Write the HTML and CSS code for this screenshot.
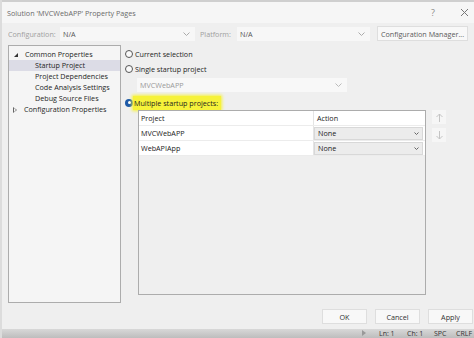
FILE: index.html
```html
<!DOCTYPE html>
<html>
<head>
<meta charset="utf-8">
<link rel="stylesheet" href="styles.css">
</head>
<body>
<div class="dialog">
  <div class="titlebar">
    <span class="title">Solution 'MVCWebAPP' Property Pages</span>
    <span class="tb-btn help">?</span>
    <span class="tb-btn close">
      <svg width="9" height="9" viewBox="0 0 9 9"><path d="M1 1L8 8M8 1L1 8" stroke="#777" stroke-width="1"/></svg>
    </span>
  </div>
  <div class="config-row">
    <span class="lbl lbl-config">Configuration:</span>
    <div class="combo combo-config"><span>N/A</span><svg class="chev" width="7" height="4" viewBox="0 0 7 4"><path d="M0.5 0.5L3.5 3.5L6.5 0.5" stroke="#aaa" fill="none"/></svg></div>
    <span class="lbl lbl-platform">Platform:</span>
    <div class="combo combo-platform"><span>N/A</span><svg class="chev" width="7" height="4" viewBox="0 0 7 4"><path d="M0.5 0.5L3.5 3.5L6.5 0.5" stroke="#aaa" fill="none"/></svg></div>
    <div class="btn cfg-btn">Configuration Manager...</div>
  </div>
  <div class="main">
    <div class="tree">
      <div class="node top"><span class="tri expanded"></span>Common Properties</div>
      <div class="node child selected">Startup Project</div>
      <div class="node child">Project Dependencies</div>
      <div class="node child">Code Analysis Settings</div>
      <div class="node child">Debug Source Files</div>
      <div class="node top"><span class="tri collapsed"></span>Configuration Properties</div>
    </div>
    <div class="right">
      <label class="radio-row r1"><span class="radio"></span>Current selection</label>
      <label class="radio-row r2"><span class="radio"></span>Single startup project</label>
      <div class="combo combo-single"><span>MVCWebAPP</span><svg class="chev" width="7" height="4" viewBox="0 0 7 4"><path d="M0.5 0.5L3.5 3.5L6.5 0.5" stroke="#bbb" fill="none"/></svg></div>
      <label class="radio-row r3"><span class="radio checked"></span><span class="hl">Multiple startup projects:</span></label>
      <div class="grid-wrap">
        <div class="grid">
          <div class="grow ghead"><div class="c1">Project</div><div class="c2">Action</div></div>
          <div class="grow"><div class="c1">MVCWebAPP</div><div class="c2"><div class="cell-combo">None<svg class="chev" width="5" height="3" viewBox="0 0 5 3"><path d="M0.5 0.5L2.5 2.5L4.5 0.5" stroke="#666" fill="none"/></svg></div></div></div>
          <div class="grow"><div class="c1">WebAPIApp</div><div class="c2"><div class="cell-combo">None<svg class="chev" width="5" height="3" viewBox="0 0 5 3"><path d="M0.5 0.5L2.5 2.5L4.5 0.5" stroke="#666" fill="none"/></svg></div></div></div>
        </div>
        <div class="arrows">
          <div class="arrow-btn"><svg width="7" height="9" viewBox="0 0 7 9"><path d="M3.5 9V1M0.5 4L3.5 1L6.5 4" stroke="#c4c4c4" fill="none"/></svg></div>
          <div class="arrow-btn"><svg width="7" height="9" viewBox="0 0 7 9"><path d="M3.5 0V8M0.5 5L3.5 8L6.5 5" stroke="#c4c4c4" fill="none"/></svg></div>
        </div>
      </div>
    </div>
  </div>
  <div class="buttons">
    <div class="btn dbtn">OK</div>
    <div class="btn dbtn">Cancel</div>
    <div class="btn dbtn">Apply</div>
  </div>
  <div class="statusbar">
    <span class="sb-tri"></span>
    <span class="sb-item ln">Ln: 1</span>
    <span class="sb-item ch">Ch: 1</span>
    <span class="sb-item spc">SPC</span>
    <span class="sb-item crlf">CRLF</span>
  </div>
</div>
</body>
</html>
```

FILE: styles.css
```css
html, body {
  margin: 0;
  padding: 0;
}
body {
  width: 474px;
  height: 338px;
  overflow: hidden;
  background: #efefef;
  font-family: "Open Sans", "Noto Sans", sans-serif;
  font-size: 7.2px;
  color: #222;
}
.dialog {
  display: flex;
  flex-direction: column;
  height: 338px;
  border-left: 2px solid #dcdcdc;
  box-sizing: border-box;
}
.titlebar {
  display: flex;
  align-items: center;
  height: 21px;
  border-top: 2px solid #cfcfcf;
  background: #f6f6f6;
  padding-left: 5px;
}
.title {
  color: #6a6a6a;
  flex: 1;
}
.tb-btn {
  color: #8a8a8a;
  font-size: 9px;
}
.help {
  width: 29px;
}
.close {
  width: 12px;
  margin-right: 2px;
  display: flex;
  align-items: center;
}
.config-row {
  display: flex;
  align-items: center;
  height: 15px;
  margin-top: 3px;
  padding-left: 6px;
}
.config-row > * {
  flex-shrink: 0;
  white-space: nowrap;
  overflow: hidden;
}
.lbl {
  color: #a0a0a0;
}
.lbl-config {
  width: 52px;
}
.combo {
  display: flex;
  align-items: center;
  justify-content: space-between;
  height: 14px;
  box-sizing: border-box;
  padding: 0 5px 0 3px;
  background: #f7f7f7;
  color: #555;
}
.combo-config {
  width: 135px;
}
.lbl-platform {
  margin-left: 5px;
  width: 37px;
}
.combo-platform {
  width: 133px;
}
.btn {
  display: flex;
  align-items: center;
  justify-content: center;
  background: #f8f8f8;
  border: 1px solid #dedede;
  box-sizing: border-box;
  color: #444;
}
.cfg-btn {
  margin-left: 7px;
  width: 91px;
  height: 15px;
  color: #5a5a5a;
}
.main {
  display: flex;
  margin-top: 4px;
  padding-left: 6px;
}
.tree {
  width: 113px;
  height: 258px;
  box-sizing: border-box;
  border: 1px solid #acacac;
  background: #f5f5f5;
  padding-top: 3px;
}
.node {
  height: 11px;
  line-height: 11px;
  white-space: nowrap;
  color: #1e1e1e;
}
.node.top {
  padding-left: 4px;
  display: flex;
  align-items: center;
}
.node.child {
  padding-left: 26px;
}
.node.selected {
  background: #dcdce6;
}
.tri {
  display: inline-block;
  width: 0;
  height: 0;
  margin-right: 7px;
}
.tri.expanded {
  margin-left: 1px;
  border-left: 4px solid transparent;
  border-bottom: 4px solid #333;
}
.tri.collapsed {
  border-top: 3px solid transparent;
  border-bottom: 3px solid transparent;
  border-left: 4px solid #666;
  position: relative;
}
.tri.collapsed::after {
  content: "";
  position: absolute;
  left: -3px;
  top: -2px;
  border-top: 2px solid transparent;
  border-bottom: 2px solid transparent;
  border-left: 2px solid #f5f5f5;
}
.right {
  display: flex;
  flex-direction: column;
  margin-left: 4px;
}
.radio-row {
  display: flex;
  align-items: center;
  height: 13px;
  white-space: nowrap;
  color: #1e1e1e;
}
.r1 {
  margin-top: 2px;
}
.r2 {
  margin-top: 2px;
}
.radio {
  width: 8px;
  height: 8px;
  border: 1px solid #555;
  border-radius: 50%;
  box-sizing: border-box;
  margin-right: 2px;
  background: #fafafa;
}
.radio.checked {
  border: none;
  background: #1d5aa8;
  display: flex;
  align-items: center;
  justify-content: center;
}
.radio.checked::after {
  content: "";
  width: 3px;
  height: 3px;
  border-radius: 50%;
  background: #fff;
}
.combo-single {
  margin-top: 3px;
  margin-left: 12px;
  width: 210px;
  color: #9a9a9a;
  background: #f8f8f8;
}
.r3 {
  margin-top: 4px;
}
.hl {
  background: #f6f23a;
  padding: 2px 3px 2px 1px;
  margin-left: -2px;
  box-shadow: 0 0 3px 1px #f6f23a;
}
.grid-wrap {
  display: flex;
  margin-top: 1px;
}
.grid {
  margin-left: 13px;
  width: 288px;
  height: 185px;
  box-sizing: border-box;
  border: 1px solid #acacac;
  background: #efefef;
}
.grow {
  display: flex;
  height: 14px;
  border-bottom: 1px solid #ececec;
  background: #fff;
}
.grow .c1 {
  width: 172px;
  padding-left: 2px;
  display: flex;
  align-items: center;
  border-right: 1px solid #e4e4e4;
}
.grow .c2 {
  flex: 1;
  display: flex;
  align-items: center;
}
.ghead .c2 {
  padding-left: 3px;
}
.cell-combo {
  flex: 1;
  height: 13px;
  display: flex;
  align-items: center;
  justify-content: space-between;
  padding: 0 3px 0 3px;
  margin-right: 2px;
  background: #ececec;
  border: 1px solid #d8d8d8;
  box-sizing: border-box;
}
.arrows {
  display: flex;
  flex-direction: column;
  margin-left: 6px;
  gap: 4px;
}
.arrow-btn {
  width: 14px;
  height: 14px;
  display: flex;
  align-items: center;
  justify-content: center;
  background: #f6f6f6;
}
.buttons {
  display: flex;
  justify-content: flex-end;
  gap: 8px;
  margin-top: 6px;
  padding-right: 1px;
}
.dbtn {
  width: 45px;
  height: 15px;
  color: #333;
}
.statusbar {
  margin-top: auto;
  height: 9px;
  background: linear-gradient(#d8d8d8, #bdbdbd);
  display: flex;
  align-items: center;
  font-size: 7px;
  color: #333;
  position: relative;
}
.sb-tri {
  position: absolute;
  left: 360px;
  top: 1px;
  border-top: 3px solid transparent;
  border-bottom: 3px solid transparent;
  border-left: 4px solid #999;
}
.sb-item {
  position: absolute;
  top: 0;
  line-height: 9px;
}
.ln { left: 377px; }
.ch { left: 405px; }
.spc { left: 432px; }
.crlf { left: 454px; }
```
